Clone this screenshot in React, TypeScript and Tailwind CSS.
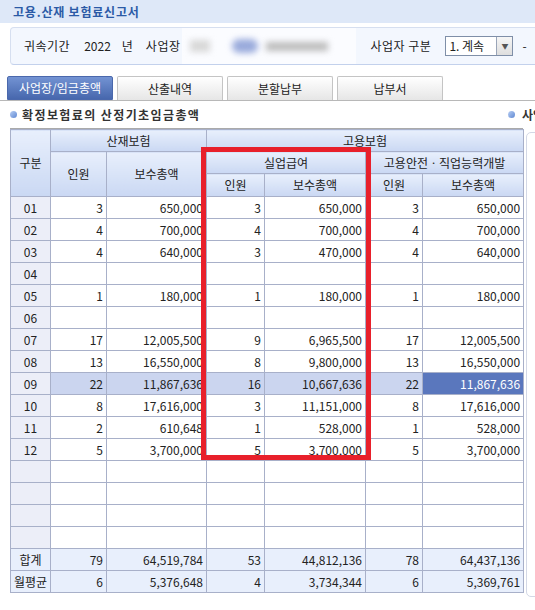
type Row = [string, string, string, string, string, string, string];

const months: Row[] = [
  ["01", "3", "650,000", "3", "650,000", "3", "650,000"],
  ["02", "4", "700,000", "4", "700,000", "4", "700,000"],
  ["03", "4", "640,000", "3", "470,000", "4", "640,000"],
  ["04", "", "", "", "", "", ""],
  ["05", "1", "180,000", "1", "180,000", "1", "180,000"],
  ["06", "", "", "", "", "", ""],
  ["07", "17", "12,005,500", "9", "6,965,500", "17", "12,005,500"],
  ["08", "13", "16,550,000", "8", "9,800,000", "13", "16,550,000"],
  ["09", "22", "11,867,636", "16", "10,667,636", "22", "11,867,636"],
  ["10", "8", "17,616,000", "3", "11,151,000", "8", "17,616,000"],
  ["11", "2", "610,648", "1", "528,000", "1", "528,000"],
  ["12", "5", "3,700,000", "5", "3,700,000", "5", "3,700,000"],
  ["", "", "", "", "", "", ""],
  ["", "", "", "", "", "", ""],
  ["", "", "", "", "", "", ""],
  ["", "", "", "", "", "", ""],
];

const totals: Row[] = [
  ["합계", "79", "64,519,784", "53", "44,812,136", "78", "64,437,136"],
  ["월평균", "6", "5,376,648", "4", "3,734,344", "6", "5,369,761"],
];

const th = "border border-[#a8b0c9] bg-gradient-to-b from-[#e8effc] to-[#cad8f3] p-0 text-center font-normal text-[#222]";
const td = "border border-[#a8b0c9] p-0 pr-[3px] text-right whitespace-nowrap overflow-hidden";

function Tab({ label, active }: { label: string; active?: boolean }) {
  return (
    <div
      className={
        active
          ? "flex h-[24px] w-[106px] items-center justify-center rounded-t-[2px] border border-[#4a68ac] bg-gradient-to-b from-[#7393d3] to-[#4767ad] text-white"
          : "flex h-[24px] w-[106px] items-center justify-center rounded-t-[2px] border border-b-0 border-[#c4c4c4] bg-gradient-to-b from-white to-[#e6e6e6] text-[#222]"
      }
    >
      {label}
    </div>
  );
}

export default function App() {
  return (
    <div className="h-[610px] w-[535px] overflow-hidden bg-white font-['Noto_Sans_CJK_KR',sans-serif] text-[12px] text-[#222]">
      <div className="flex h-[23px] items-center bg-[#dee8f8] pl-[13px] text-[12px] font-bold tracking-[0.8px] text-[#2b5aa6]">
        고용.산재 보험료신고서
      </div>

      <div className="mt-[4px] ml-[10px] flex h-[38px] w-[540px] flex-none items-center rounded-l-[4px] border border-[#d6dff0] border-b-[#c3d1ec] bg-[#f3f7fe]">
        <span className="ml-[13px] tracking-[0.5px]">귀속기간</span>
        <span className="ml-[14px]">2022</span>
        <span className="ml-[11px]">년</span>
        <span className="ml-[13px] tracking-[0.5px]">사업장</span>
        <div className="ml-[2px] flex h-full w-[174px] items-center overflow-hidden bg-[#fbfcff]">
          <span className="ml-[8px] h-[12px] w-[20px] bg-[#d8d8d8] blur-[3px]" />
          <span className="ml-[22px] h-[14px] w-[26px] rounded-full bg-[#9aabdc] blur-[3px]" />
          <span className="ml-[8px] h-[9px] w-[62px] bg-[#bcbcbc] blur-[3px]" />
        </div>
        <span className="ml-[14px] tracking-[0.5px]">사업자 구분</span>
        <div className="ml-[14px] flex h-[20px] w-[68px] items-stretch border border-[#7f8fa8] bg-white">
          <span className="flex-1 pl-[3px] leading-[18px]">1. 계속</span>
          <span className="flex w-[16px] items-center justify-center border-l border-[#9aa5b8] bg-gradient-to-b from-[#f6f6f6] to-[#dedede] text-[7px] text-[#555]">
            ▼
          </span>
        </div>
        <span className="ml-[9px]">-</span>
      </div>

      <div className="mt-[11px] flex gap-[4px] border-b border-[#b8b8b8] pl-[7px]">
        <Tab label="사업장/임금총액" active />
        <Tab label="산출내역" />
        <Tab label="분할납부" />
        <Tab label="납부서" />
      </div>

      <div className="ml-[10px] flex h-[28px] w-[513px] items-center border-b border-[#aaaaaa]">
        <span className="h-[7px] w-[7px] flex-none rounded-full bg-gradient-to-br from-[#b9cff3] to-[#5f87d2]" />
        <span className="ml-[5px] font-bold tracking-[1.4px] text-[#333]">확정보험료의 산정기초임금총액</span>
        <div className="ml-auto flex w-[15px] flex-none items-center whitespace-nowrap">
          <span className="h-[7px] w-[7px] flex-none rounded-full bg-gradient-to-br from-[#b9cff3] to-[#5f87d2]" />
          <span className="ml-[7px] font-bold text-[#333]">사업장</span>
        </div>
      </div>

      <div className="flex">
        <div className="relative ml-[10px] w-[513px] flex-none">
          <table className="w-[513px] table-fixed border-collapse">
            <colgroup>
              <col className="w-[40px]" />
              <col className="w-[56px]" />
              <col className="w-[100px]" />
              <col className="w-[58px]" />
              <col className="w-[101px]" />
              <col className="w-[57px]" />
              <col className="w-[101px]" />
            </colgroup>
            <thead>
              <tr className="h-[22px]">
                <th rowSpan={3} className={th}>구분</th>
                <th colSpan={2} className={th}>산재보험</th>
                <th colSpan={4} className={th}>고용보험</th>
              </tr>
              <tr className="h-[22px]">
                <th rowSpan={2} className={th}>인원</th>
                <th rowSpan={2} className={th}>보수총액</th>
                <th colSpan={2} className={th}>실업급여</th>
                <th colSpan={2} className={th}>고용안전ㆍ직업능력개발</th>
              </tr>
              <tr className="h-[23px]">
                <th className={th}>인원</th>
                <th className={th}>보수총액</th>
                <th className={th}>인원</th>
                <th className={th}>보수총액</th>
              </tr>
            </thead>
            <tbody>
              {months.map((r, i) => {
                const hi = r[0] === "09";
                return (
                  <tr key={i} className="h-[22px]">
                    <td className="border border-[#a8b0c9] bg-[#eceef8] p-0 text-center">{r[0]}</td>
                    {r.slice(1).map((v, j) => (
                      <td
                        key={j}
                        className={
                          hi && j === 5
                            ? `${td} bg-[#5a77bd] text-white`
                            : hi
                              ? `${td} bg-[#cbd5ef]`
                              : `${td} bg-white`
                        }
                      >
                        {v}
                      </td>
                    ))}
                  </tr>
                );
              })}
              {totals.map((r) => (
                <tr key={r[0]} className="h-[22px]">
                  <td className="border border-[#a8b0c9] bg-[#e8effc] p-0 text-center whitespace-nowrap">{r[0]}</td>
                  {r.slice(1).map((v, j) => (
                    <td key={j} className={`${td} bg-[#e8effc]`}>
                      {v}
                    </td>
                  ))}
                </tr>
              ))}
            </tbody>
          </table>
          <div className="pointer-events-none absolute top-[18px] left-[191px] h-[313px] w-[170px] border-[5px] border-[#e8202b]" />
        </div>
        <div className="mt-[3px] ml-[3px] h-[465px] w-[40px] flex-none rounded-[5px] border border-[#d3d8e6] bg-white" />
      </div>
    </div>
  );
}
